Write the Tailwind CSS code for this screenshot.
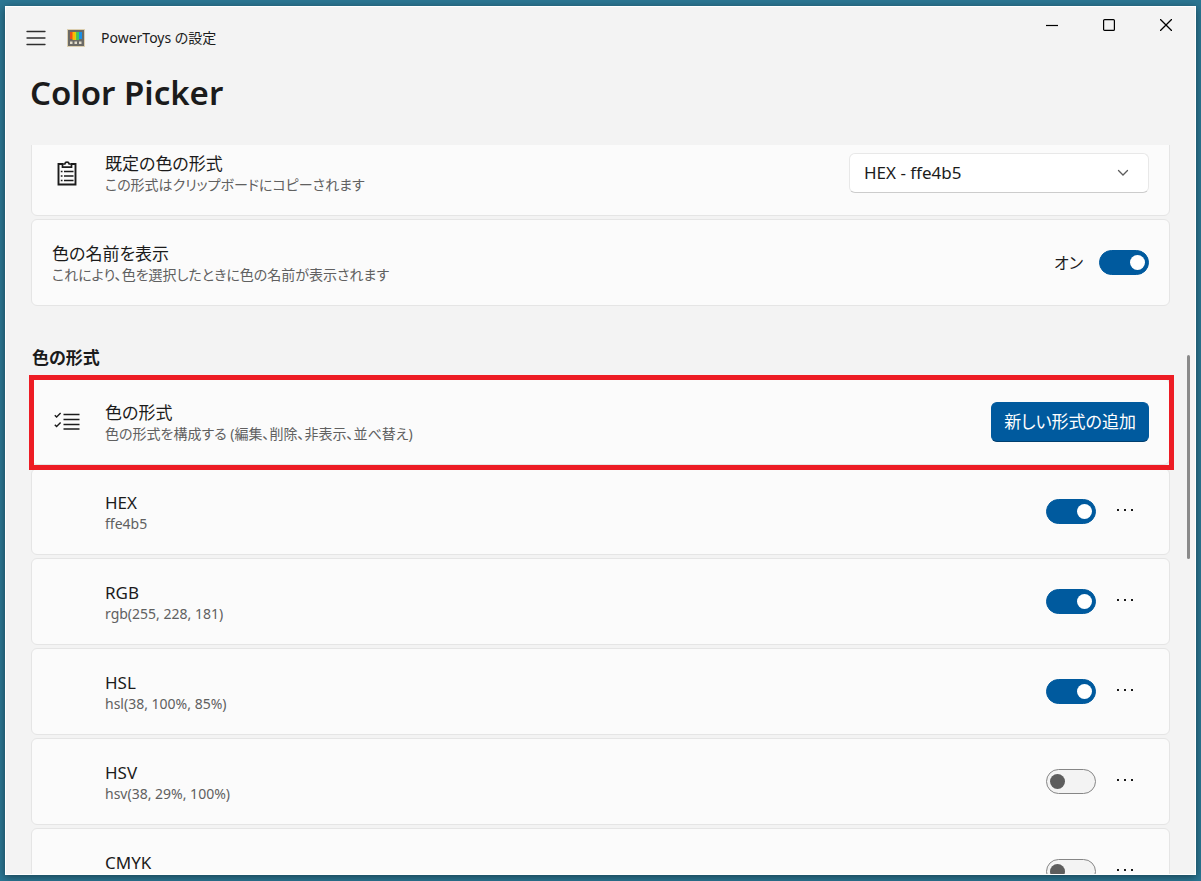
<!DOCTYPE html>
<html lang="ja">
<head>
  <meta charset="UTF-8">
  <meta name="viewport" content="width=device-width, initial-scale=1.0">
  <title>PowerToys の設定</title>
  <script src="https://cdn.jsdelivr.net/npm/@tailwindcss/browser@4"></script>
  <style>
    body {
      font-family: 'Noto Sans', 'Noto Sans CJK JP', sans-serif;
      font-feature-settings: 'palt';
    }
  </style>
</head>
<body class="h-screen overflow-hidden bg-[#2b7693] px-[5px] py-[6px] text-[#1b1b1b]">

  <!-- Window -->
  <div class="relative flex h-full flex-col border border-white bg-[#f3f3f3] shadow-[0_2px_8px_rgba(0,0,0,0.45)]">

    <!-- Title Bar -->
    <header class="flex h-[62px] shrink-0 items-start justify-between">
      <div class="flex h-full items-center pl-5">
        <button type="button" aria-label="メニュー" class="mr-[21px]">
          <svg class="h-5 w-5" viewBox="0 0 20 20" fill="none" stroke="#2e2e2e" stroke-width="1.3" stroke-linecap="round">
            <path d="M1 3.5h18M1 10h18M1 16.500h18"/>
          </svg>
        </button>
        <svg class="mr-4 h-[18px] w-[18px]" viewBox="0 0 18 18">
          <rect x=".5" y=".5" width="17" height="17" fill="#6b6a66" stroke="#dccfb0"/>
          <path fill="#e8501c" d="M3 3h3v7H3z"/>
          <path fill="#ffb900" d="M5.500 3H8v8H5.500z"/>
          <path fill="#c5dd1c" d="M8 3h1.500v8H8z"/>
          <path fill="#3fcb5a" d="M9.500 3H12v8H9.500z"/>
          <path fill="#1a8fe6" d="M12 3h3v7h-3z"/>
          <path fill="#e2dccb" d="M3 12.500h2.500V15H3zM7.500 12.500H10V15H7.500zM12 12.500h2.500V15H12z"/>
        </svg>
        <span class="text-sm">PowerToys の設定</span>
      </div>
      <div class="flex pr-px">
        <button type="button" aria-label="最小化" class="flex h-9 w-[57px] items-center justify-center">
          <svg class="h-3 w-3" viewBox="0 0 12 12" stroke="#000" stroke-width="1.2"><path d="M0 6.500h12"/></svg>
        </button>
        <button type="button" aria-label="最大化" class="flex h-9 w-[57px] items-center justify-center">
          <svg class="h-3 w-3" viewBox="0 0 12 12" fill="none" stroke="#000" stroke-width="1.2"><rect x=".6" y=".6" width="10.800" height="10.800" rx="1"/></svg>
        </button>
        <button type="button" aria-label="閉じる" class="flex h-9 w-[57px] items-center justify-center">
          <svg class="h-3 w-3" viewBox="0 0 12 12" stroke="#000" stroke-width="1.3"><path d="M0 0l12 12M12 0L0 12"/></svg>
        </button>
      </div>
    </header>

    <h1 class="mb-7 shrink-0 pl-6 text-[33px] leading-12 font-semibold">Color Picker</h1>

    <!-- Settings List -->
    <main class="min-h-0 flex-1 overflow-hidden px-[25px]">
      <div class="-mt-4 flex flex-col gap-[3px]">

        <div class="flex h-[87px] shrink-0 items-center rounded-md border border-[#e5e5e5] bg-[#fbfbfb] px-5">
          <div class="mr-6 flex w-[29px] justify-center">
            <svg class="h-[26px] w-5" viewBox="0 0 20 26" fill="none" stroke="#1b1b1b">
              <path d="M6 4H1.500v20.500h17V4H14" stroke-width="1.900"/>
              <path d="M5.500 7.200V4h2.300a2.250 2.250 0 0 1 4.400 0h2.300v3.200z" stroke-width="1.700"/>
              <path d="M7 11.500h9.500M7 16h9.500M7 20.500h9.500M3.800 11.500h1.700M3.800 16h1.700M3.800 20.500h1.700" stroke-width="1.500"/>
            </svg>
          </div>
          <div class="flex-1 pt-0.5">
            <label for="defaultFormat" class="block text-[17px] leading-[22px]">既定の色の形式</label>
            <p class="text-sm leading-5 text-[#606060]">この形式はクリップボードにコピーされます</p>
          </div>
          <div class="relative w-[300px]">
            <select id="defaultFormat" class="h-10 w-full appearance-none rounded-md border border-[#e8e8e8] border-b-[#cccccc] bg-white px-3.5 text-[17px]">
              <option>HEX - ffe4b5</option>
              <option>RGB - rgb(255, 228, 181)</option>
            </select>
            <svg class="pointer-events-none absolute top-4 right-5 h-2 w-3" viewBox="0 0 12 8" fill="none" stroke="#5c5c5c" stroke-width="1.300" stroke-linecap="round"><path d="M1.500 1.500L6 6l4.500-4.500"/></svg>
          </div>
        </div>

        <div class="flex h-[87px] shrink-0 items-center rounded-md border border-[#e5e5e5] bg-[#fbfbfb] px-5">
          <div class="flex-1 pt-0.5">
            <p class="text-[17px] leading-[22px]">色の名前を表示</p>
            <p class="text-sm leading-5 text-[#606060]">これにより、色を選択したときに色の名前が表示されます</p>
          </div>
          <label for="showName" class="mr-4 text-base">オン</label>
          <input type="checkbox" id="showName" checked class="flex h-[25px] w-[50px] appearance-none items-center rounded-full border border-[#868686] bg-[#f3f3f3] px-[3px] before:h-[15px] before:w-[15px] before:rounded-full before:bg-[#5d5d5d] before:content-[''] checked:justify-end checked:border-[#005a9e] checked:bg-[#005a9e] checked:before:bg-white">
        </div>

        <h2 class="mt-9 mb-1 pl-px text-[17px] leading-[26px] font-semibold">色の形式</h2>

        <div class="relative flex h-[87px] shrink-0 items-center rounded-md border border-[#e5e5e5] bg-[#fbfbfb] px-5">
          <div class="mr-6 flex w-[29px] justify-center">
            <svg class="h-5 w-[26px]" viewBox="0 0 26 20" fill="none" stroke="#1b1b1b" stroke-width="1.600">
              <path d="M9.500 2.500h16M9.500 7.500h16M9.500 12.500h16M9.500 17h16"/>
              <path d="M.8 3.200l1.800 1.900L6.600 1M.8 12.700l1.800 1.900 4-4.100" stroke-width="1.400"/>
            </svg>
          </div>
          <div class="flex-1 pt-0.5">
            <p class="text-[17px] leading-[22px]">色の形式</p>
            <p class="text-sm leading-5 text-[#606060]">色の形式を構成する (編集、削除、非表示、並べ替え)</p>
          </div>
          <button type="button" class="h-10 rounded-md border border-[#005a9e] border-b-[#003f6f] bg-[#005a9e] px-3 text-[17px] text-white">新しい形式の追加</button>
          <div class="pointer-events-none absolute -top-1 -right-[5px] -bottom-1.5 -left-[3px] z-10 border-5 border-[#ed1c24]"></div>
        </div>

        <div id="formatList" class="flex flex-col gap-[3px]"></div>
      </div>
    </main>

    <!-- Scrollbar -->
    <div class="absolute top-[348px] right-[5px] h-[204px] w-[3px] rounded-full bg-[#8a8a8a]"></div>
  </div>

  <!-- JS -->
  <script>
    const formats = [
      { name: 'HEX', example: 'ffe4b5', shown: true },
      { name: 'RGB', example: 'rgb(255, 228, 181)', shown: true },
      { name: 'HSL', example: 'hsl(38, 100%, 85%)', shown: true },
      { name: 'HSV', example: 'hsv(38, 29%, 100%)', shown: false },
      { name: 'CMYK', example: '', shown: false }
    ];

    const formatList = document.getElementById('formatList');

    formats.forEach(format => {
      formatList.innerHTML += `
        <div class="flex h-[87px] shrink-0 items-center rounded-md border border-[#e5e5e5] bg-[#fbfbfb] pr-5 pl-[73px]">
          <div class="flex-1 pt-0.5">
            <label for="show${format.name}" class="block text-[17px] leading-[22px]">${format.name}</label>
            <p class="min-h-5 text-sm leading-5 text-[#606060]">${format.example}</p>
          </div>
          <input type="checkbox" id="show${format.name}" ${format.shown ? 'checked' : ''} class="flex h-[25px] w-[50px] appearance-none items-center rounded-full border border-[#868686] bg-[#f3f3f3] px-[3px] before:h-[15px] before:w-[15px] before:rounded-full before:bg-[#5d5d5d] before:content-[''] checked:justify-end checked:border-[#005a9e] checked:bg-[#005a9e] checked:before:bg-white">
          <button type="button" aria-label="その他" class="ml-[5px] flex h-10 w-12 items-center justify-center">
            <svg class="h-[5px] w-[18px]" viewBox="0 0 18 5" fill="#1b1b1b"><path d="M1 0h2v2H1zM8 0h2v2H8zM15 0h2v2h-2z"/></svg>
          </button>
        </div>
      `;
    });
  </script>
</body>
</html>
